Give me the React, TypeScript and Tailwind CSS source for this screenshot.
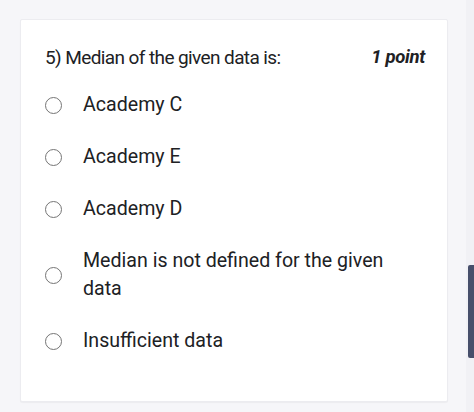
import React from "react";

const options = [
  "Academy C",
  "Academy E",
  "Academy D",
  "Median is not defined for the given data",
  "Insufficient data",
];

function Radio() {
  return (
    <span className="shrink-0 w-[17px] h-[17px] rounded-full border-[1.5px] border-[#757575] bg-white" />
  );
}

export default function App() {
  return (
    <div
      className="relative w-[474px] h-[412px] bg-[#f6f6f9] overflow-hidden"
      style={{ fontFamily: "Roboto, 'Noto Sans', sans-serif" }}
    >
      <div className="absolute top-[19px] left-[20px] w-[428px] h-[383px] bg-white border border-[#ececf0] shadow-[0_1px_1px_rgba(0,0,0,0.04)] rounded-[2px] pt-[24px] pl-[24px] pr-[22px]">
        <div className="flex items-center justify-between h-[28px] text-[#202124]">
          <span className="text-[19px] tracking-[-0.6px]">5) Median of the given data is:</span>
          <span className="font-bold italic text-[18.5px] tracking-[-0.3px]">1 point</span>
        </div>

        <div className="mt-[19px] flex flex-col gap-[24px]">
          {options.map((opt) => (
            <label key={opt} className="flex items-center gap-[21px]">
              <Radio />
              <span className="text-[19.6px] leading-[28px] text-[#202124] w-[320px]">{opt}</span>
            </label>
          ))}
        </div>
      </div>

      {/* scrollbar */}
      <div className="absolute top-0 right-0 w-[8px] h-full bg-[#f1f1f5]" />
      <div className="absolute top-[265px] right-0 w-[6px] h-[93px] rounded-l-[2px] bg-[#474f6b]" />
    </div>
  );
}
